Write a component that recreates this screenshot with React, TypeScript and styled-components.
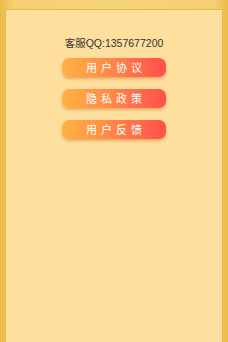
import styled, { createGlobalStyle } from "styled-components";

const GlobalStyle = createGlobalStyle`
  html, body {
    margin: 0;
    padding: 0;
    height: 100%;
  }
  body {
    font-family: "Noto Sans CJK SC", "Liberation Sans", sans-serif;
  }
  #root {
    height: 100%;
  }
`;

// fond doré avec bords plus foncés
const Page = styled.div`
  box-sizing: border-box;
  height: 100vh;
  padding: 9px 5px 0 5px;
  background: linear-gradient(90deg, #ecbb48 0%, #f5d072 6%, #f6d47c 50%, #f5d072 94%, #ecbb48 100%);
  display: flex;
`;

const Panel = styled.div`
  flex: 1;
  box-sizing: border-box;
  background: #fedf9e;
  border: 1px solid #e8b84a;
  border-bottom: none;
  display: flex;
  flex-direction: column;
  align-items: center;
  padding-top: 26px;
`;

const Contact = styled.div`
  font-family: "Liberation Sans", "Noto Sans CJK SC", sans-serif;
  font-size: 10.5px;
  line-height: 14px;
  color: #333;
  margin-bottom: 8px;
`;

const LinkButton = styled.button`
  width: 104px;
  height: 19px;
  margin-bottom: 12px;
  border: none;
  border-radius: 7px;
  background: linear-gradient(90deg, #ffb243 0%, #ff8a48 45%, #ff4f4f 100%);
  box-shadow: 0 2px 3px rgba(190, 110, 30, 0.45);
  color: #fff;
  font-family: "Noto Sans CJK SC", sans-serif;
  font-size: 11px;
  line-height: 19px;
  letter-spacing: 4px;
  padding: 0 0 0 4px;
  cursor: pointer;
`;

const links = ["用户协议", "隐私政策", "用户反馈"];

export default function App() {
  return (
    <>
      <GlobalStyle />
      <Page>
        <Panel>
          <Contact>客服QQ:1357677200</Contact>
          {links.map((l) => (
            <LinkButton key={l}>{l}</LinkButton>
          ))}
        </Panel>
      </Page>
    </>
  );
}
